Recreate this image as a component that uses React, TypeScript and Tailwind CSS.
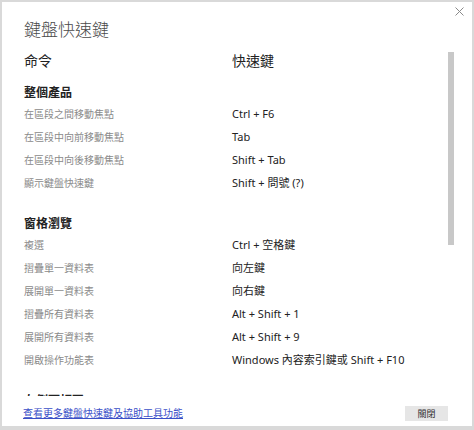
const font = {
  fontFamily: '"Segoe UI", "Noto Sans", "Noto Sans CJK TC", sans-serif',
};

type Row = { cmd: string; keys: string };

const sections: { title: string; rows: Row[] }[] = [
  {
    title: "整個產品",
    rows: [
      { cmd: "在區段之間移動焦點", keys: "Ctrl + F6" },
      { cmd: "在區段中向前移動焦點", keys: "Tab" },
      { cmd: "在區段中向後移動焦點", keys: "Shift + Tab" },
      { cmd: "顯示鍵盤快速鍵", keys: "Shift + 問號 (?)" },
    ],
  },
  {
    title: "窗格瀏覽",
    rows: [
      { cmd: "複選", keys: "Ctrl + 空格鍵" },
      { cmd: "摺疊單一資料表", keys: "向左鍵" },
      { cmd: "展開單一資料表", keys: "向右鍵" },
      { cmd: "摺疊所有資料表", keys: "Alt + Shift + 1" },
      { cmd: "展開所有資料表", keys: "Alt + Shift + 9" },
      { cmd: "開啟操作功能表", keys: "Windows 內容索引鍵或 Shift + F10" },
    ],
  },
  {
    title: "左側面板區",
    rows: [
      { cmd: "移至下一個項目", keys: "向下鍵" },
      { cmd: "移至上一個項目", keys: "向上鍵" },
    ],
  },
];

const App = () => {
  return (
    <div
      className="w-[474px] h-[430px] bg-[#d9d9d9] pt-[2px] pl-[2px] pr-[2px] pb-[4px]"
      style={font}
    >
      <div className="relative w-full h-full bg-white flex flex-col">
        {/* close */}
        <button className="absolute right-[6px] top-[2px] w-[14px] h-[14px] flex items-center justify-center">
          <svg width="9" height="9" viewBox="0 0 9 9" stroke="#8a8a8a" strokeWidth="1">
            <path d="M0.5 0.5 L8.5 8.5 M8.5 0.5 L0.5 8.5" />
          </svg>
        </button>

        <h1 className="shrink-0 pl-[22px] pt-[17px] h-[48px] text-[17px] leading-[22px] font-light text-[#4a4a4a]">
          鍵盤快速鍵
        </h1>

        <div className="relative flex-1 overflow-hidden">
          <div className="pl-[22px] pr-[30px]">
            <div className="flex h-[20px] items-center text-[14px] text-[#222]">
              <div className="w-[208px]">命令</div>
              <div>快速鍵</div>
            </div>

            {sections.map((s, i) => (
              <div key={i} className={i === 0 ? "mt-[13px]" : "mt-[19px]"}>
                <div className="h-[20px] flex items-center text-[12px] font-bold text-[#222]">
                  {s.title}
                </div>
                {s.rows.map((r, j) => (
                  <div key={j} className="flex h-[23px] items-center">
                    <div className="w-[208px] text-[10px] text-[#8a8a8a]">{r.cmd}</div>
                    <div className="text-[11px] text-[#222]">{r.keys}</div>
                  </div>
                ))}
              </div>
            ))}
          </div>

          {/* scrollbar */}
          <div className="absolute left-[446px] top-[2px] w-[6px] h-[193px] bg-[#c8c8c8]" />
        </div>

        <div className="shrink-0 h-[30px] flex items-center justify-between pl-[21px] pr-[24px] pt-[4px]">
          <a href="#" className="text-[10px] leading-[14px] text-[#3b4fc8] underline">
            查看更多鍵盤快速鍵及協助工具功能
          </a>
          <button className="w-[43px] h-[15px] bg-[#e6e6e6] text-[9px] leading-[15px] text-[#333] flex items-center justify-center">
            關閉
          </button>
        </div>
      </div>
    </div>
  );
};

export default App;
